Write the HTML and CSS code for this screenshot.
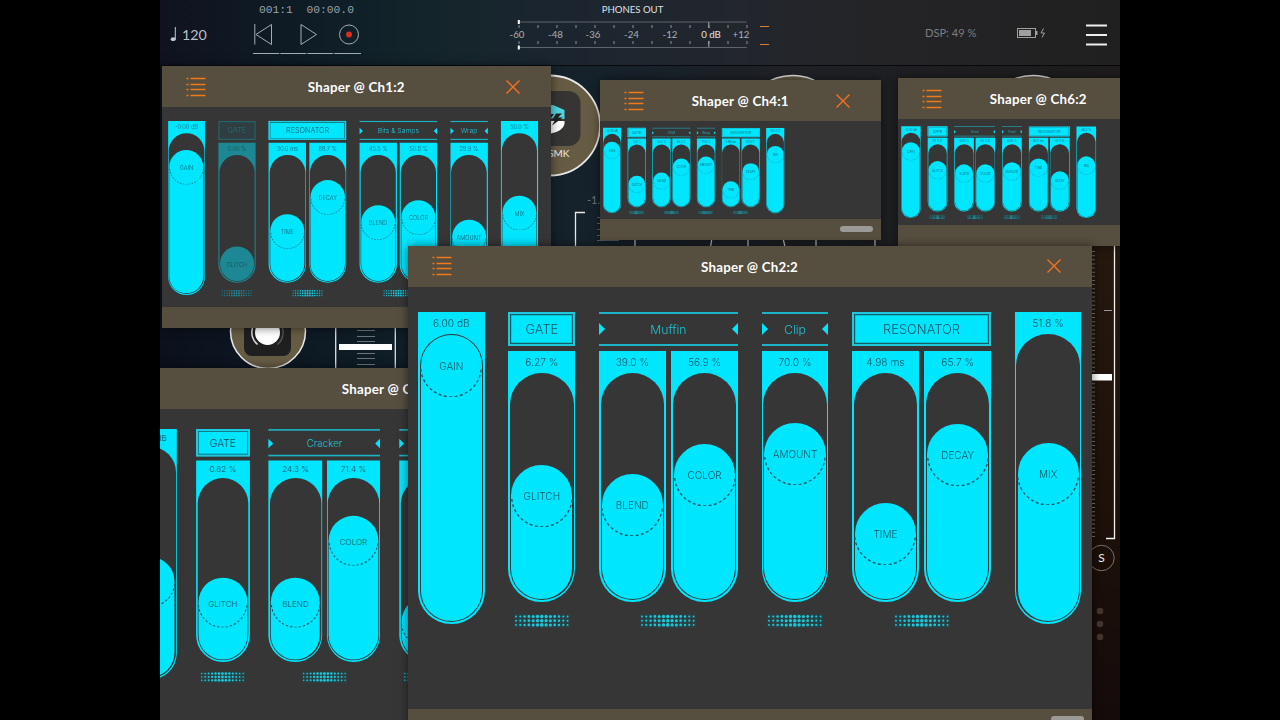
FILE: index.html
```html
<!DOCTYPE html>
<html lang="en">
<head>
    <meta charset="UTF-8">
    <meta name="viewport" content="width=device-width, initial-scale=1.0">
    <title>Shaper</title>
    <link rel="stylesheet" href="styles.css">
</head>
<body>

<!-- shared icons -->
<svg class="defs" width="0" height="0">
    <symbol id="list" viewBox="0 0 20 20">
        <path d="M4.5 1.5H19.5M4.5 7.5H19.5M4.5 12.5H19.5M4.5 18.5H19.5M0.5 1.5H2.5M0.5 7.5H2.5M0.5 12.5H2.5M0.5 18.5H2.5" fill="none" stroke="#ee7a1a" stroke-width="1.3"/>
    </symbol>
    <symbol id="close" viewBox="0 0 14 14">
        <path d="M0.5 0.5L13.5 13.5M13.5 0.5L0.5 13.5" fill="none" stroke="#f9731a" stroke-width="1.3"/>
    </symbol>
</svg>

<div class="screen">
    <svg class="mixer" width="960" height="720" viewBox="160 0 960 720">
        <!-- channel circles -->
        <circle cx="550" cy="125.5" r="50" fill="#665b43" stroke="#e8e8e8" stroke-width="1.8"/>
        <rect x="524" y="91" width="56.5" height="55" rx="12" fill="#363534"/>
        <path d="M545 106L553 105L564.5 110V119H545Z" fill="#4fd6e2"/>
        <path d="M545 121H564.5V124Q563 131 551 133.5H545Z" fill="#fff"/>
        <path d="M545 114H554L551 118H545ZM556 113.5H562L558 117.5H563L552 125.5L555 120H545V118.5H553Z" fill="#222"/>
        <text x="569.5" y="157" text-anchor="end" class="channel-name">SMK</text>
        <circle cx="792.5" cy="125.5" r="50" fill="#665b43" stroke="#ddd" stroke-width="1.5"/>
        <circle cx="1033" cy="125.5" r="50" fill="#665b43" stroke="#ddd" stroke-width="1.5"/>
        <text x="587" y="204" class="db">-1.2</text>
        <path d="M585 212.5H575.5V250" fill="none" stroke="#e8e8e8" stroke-width="1.3"/>
        <path d="M597 217.5h4M597 223.5h4M597 229.5h4M597 235.5h4M597 240.5h22" stroke="#59636a"/>
        <path d="M635 238V247M712 238L710.5 247M748 238V247M783 238L785 247M816 238V247M875 238V247" stroke="#d0d0d0" stroke-width="1.2"/>
        <!-- knob and fader -->
        <circle cx="268" cy="331" r="37.5" fill="#665b43" stroke="#e8e8e8" stroke-width="1.5"/>
        <rect x="244" y="308" width="47" height="48" rx="8" fill="#1f1f1f"/>
        <circle cx="267.5" cy="332.5" r="12.5" fill="#fff"/>
        <path d="M257.5 344.5A15.5 15.5 0 0 1 252.5 328" fill="none" stroke="#ddd" stroke-width="1.5"/>
        <path d="M277.5 344.5A15.5 15.5 0 0 0 282.5 328" fill="none" stroke="#555" stroke-width="1.5"/>
        <path d="M335.7 320V370M395.3 320V370" stroke="#e0e0e0" stroke-width="1.3"/>
        <path d="M357 330.5h18M357 336.5h18M357 341.5h18M357 353.5h18M357 358.5h18M357 364.5h18" stroke="#6d7378"/>
        <rect x="339" y="344" width="53" height="6" fill="#fff"/>
        <!-- master strip -->
        <linearGradient id="strip" x1="0" y1="0" x2="0" y2="1">
            <stop offset="0" stop-color="#24180f"/>
            <stop offset="0.6" stop-color="#1c1009"/>
            <stop offset="1" stop-color="#150b0b"/>
        </linearGradient>
        <rect x="1092" y="246" width="28" height="474" fill="url(#strip)"/>
        <path d="M1093.5 251V540" stroke="#77716b" stroke-width="3" stroke-dasharray="1 3.13"/>
        <path d="M1114.5 246V538.5H1106" fill="none" stroke="#f0f0f0" stroke-width="1.3"/>
        <path d="M1104 310.5H1112" stroke="#999"/>
        <rect x="1090" y="374" width="22" height="6.5" fill="#fff"/>
        <circle cx="1101.5" cy="558" r="12.7" fill="none" stroke="#7d706a"/>
        <text x="1101.5" y="562" text-anchor="middle" class="solo">S</text>
        <g fill="#46352e"><circle cx="1100" cy="611" r="3.3"/><circle cx="1100" cy="624" r="3.3"/><circle cx="1100" cy="637" r="3.3"/></g>
    </svg>

    <header class="topbar">
        <div class="tempo">
            <svg width="7" height="16" viewBox="0 0 7 16"><path d="M5.3 1V13" stroke="#c5c9cc"/><ellipse cx="3.2" cy="13.2" rx="2.5" ry="1.9" fill="#c5c9cc"/></svg>
            <span>120</span>
        </div>
        <div class="transport">
            <pre class="clock">001:1  00:00.0</pre>
            <svg width="108" height="35" viewBox="0 0 108 35" fill="none" stroke="#a4adb3">
                <path d="M1.8 5V25.5M18.5 5.5V25.5L3 15.5Z M48 5.5V25.5L63.5 15.5Z"/>
                <circle cx="96" cy="15.5" r="9.5"/>
                <circle cx="96" cy="15.5" r="3" fill="#d8301c" stroke="none"/>
                <path d="M0 34.5H26.3M27.3 34.5H53.3M54.3 34.5H80.3M81.3 34.5H108"/>
            </svg>
        </div>
        <svg class="meter" width="280" height="60" viewBox="500 0 280 60">
            <text x="632.5" y="12.5" class="meter-title">PHONES OUT</text>
            <path d="M518.5 22H746.7M518.5 47.5H746.7" stroke="#5d656c"/>
            <path d="M518.5 26.5H747.5M518.5 42.5H747.5" stroke="#8b9297" stroke-width="3" stroke-dasharray="1 18"/>
            <path d="M708.8 22V28M708.8 41V47" stroke="#aaa"/>
            <path d="M518.8 20V24M518.8 45.5V49.5" stroke="#fff" stroke-width="2"/>
            <g class="meter-scale">
                <text x="517" y="38">-60</text><text x="555.5" y="38">-48</text><text x="593" y="38">-36</text>
                <text x="631.5" y="38">-24</text><text x="670" y="38">-12</text><text x="711" y="38" class="zero">0 dB</text>
                <text x="741" y="38">+12</text>
            </g>
            <path d="M760 26.5H769M760 44.5H769" stroke="#d98032" stroke-width="1.2"/>
        </svg>
        <span class="dsp">DSP: 49 %</span>
        <svg class="battery" width="29" height="12" viewBox="0 0 29 12">
            <rect x="0.5" y="1.5" width="18" height="9" fill="none" stroke="#a0a0a0"/>
            <path d="M2 3H14V9H2ZM19 4H20.5V8H19Z" fill="#a0a0a0"/>
            <path d="M26.5 1.5L24 6H27.5L25 10.5" fill="none" stroke="#a0a0a0"/>
        </svg>
        <svg class="burger" width="21" height="22" viewBox="0 0 21 22"><path d="M0 1.5H21M0 11H21M0 20.5H21" stroke="#eee" stroke-width="1.8"/></svg>
    </header>
</div>

<script>
    // third value of a slider = distance from its top to the top of the thumb
    const windows = [
        { id: 'ch3', title: 'Shaper @ Ch3:1', scale: 0.803, groups: [
            { sliders: [['GAIN', '-0.00 dB', 159]] },
            { name: 'GATE', sliders: [['GLITCH', '0.82 %', 146]] },
            { name: 'Cracker', menu: true, sliders: [['BLEND', '24.3 %', 146], ['COLOR', '71.4 %', 69]] },
            { name: '', menu: true, sliders: [['', '', 170]] }
        ]},
        { id: 'ch1', title: 'Shaper @ Ch1:2', scale: 0.558, groups: [
            { sliders: [['GAIN', '-0.00 dB', 52]] },
            { name: 'GATE', off: true, sliders: [['GLITCH', '0.00 %', 186]] },
            { name: 'RESONATOR', sliders: [['TIME', '30.6 ms', 127.6], ['DECAY', '88.7 %', 67.3]] },
            { name: 'Bits & Samps', menu: true, sliders: [['BLEND', '45.5 %', 111.5], ['COLOR', '50.8 %', 102.5]] },
            { name: 'Wrap', menu: true, sliders: [['AMOUNT', '28.9 %', 138]] },
            { sliders: [['MIX', '50.0 %', 134.4]] }
        ]},
        { id: 'ch4', title: 'Shaper @ Ch4:1', scale: 0.2737, groups: [
            { sliders: [['GAIN', '-0.00 dB', 51]] },
            { name: 'GATE', sliders: [['GLITCH', '1.00 %', 136]] },
            { name: 'OSM', menu: true, sliders: [['BLEND', '33.3 %', 124], ['COLOR', '68.0 %', 73]] },
            { name: 'Wrap', menu: true, sliders: [['AMOUNT', '70.0 %', 66]] },
            { name: 'RESONATOR', sliders: [['TIME', '4.98 ms', 156], ['DECAY', '55.5 %', 90]] },
            { sliders: [['MIX', '100.0 %', 66]] }
        ]},
        { id: 'ch6', title: 'Shaper @ Ch6:2', scale: 0.294, groups: [
            { sliders: [['GAIN', '-0.00 dB', 54]] },
            { name: 'GATE', sliders: [['GLITCH', '50.0 %', 79]] },
            { name: 'Acid', menu: true, sliders: [['BLEND', '50.0 %', 90], ['COLOR', '50.0 %', 90]] },
            { name: 'Fold', menu: true, sliders: [['AMOUNT', '60.0 %', 83]] },
            { name: 'RESONATOR', sliders: [['TIME', '80.0 ms', 70], ['DECAY', '50.0 %', 114]] },
            { sliders: [['MIX', '66.2 %', 102]] }
        ]},
        { id: 'ch2', title: 'Shaper @ Ch2:2', scale: 1, groups: [
            { sliders: [['GAIN', '6.00 dB', 23]] },
            { name: 'GATE', sliders: [['GLITCH', '6.27 %', 114]] },
            { name: 'Muffin', menu: true, sliders: [['BLEND', '39.0 %', 123], ['COLOR', '56.9 %', 93]] },
            { name: 'Clip', menu: true, sliders: [['AMOUNT', '70.0 %', 72]] },
            { name: 'RESONATOR', sliders: [['TIME', '4.98 ms', 152], ['DECAY', '65.7 %', 73]] },
            { sliders: [['MIX', '51.8 %', 131]] }
        ]}
    ];

    function dots() {
        let out = '';
        for (let c = 0; c < 13; c++) {
            const r = 1.8 - Math.abs(c - 6) * 0.14;
            for (let row = 0; row < 3; row++) {
                out += `<circle cx="${2 + c * 4.3}" cy="${2.5 + row * 4.2}" r="${r.toFixed(2)}"/>`;
            }
        }
        return `<svg class="dots" width="56" height="14" viewBox="0 0 56 14">${out}</svg>`;
    }

    function slider([name, value, y]) {
        return `<div class="slider">
            <span class="value">${value}</span>
            <div class="track">
                <div class="fill" style="top: ${y - 22}px">
                    <div class="thumb">
                        <svg width="62" height="62" viewBox="0 0 62 62"><path d="M0.8 34A30.3 30.3 0 0 0 61.2 34"/></svg>
                        <span>${name}</span>
                    </div>
                </div>
            </div>
        </div>`;
    }

    function group(g) {
        const effect = g.name !== undefined;
        const head = effect ? `<div class="${g.menu ? 'select' : 'toggle'}"><span>${g.name.replace('&', '&amp;')}</span></div>` : '';
        return `<div class="group${effect ? '' : ' tall'}${g.off ? ' off' : ''}">
            ${head}
            <div class="sliders">${g.sliders.map(slider).join('')}</div>
            ${effect ? dots() : ''}
        </div>`;
    }

    windows.forEach(w => {
        const el = document.createElement('section');
        el.className = 'window ' + w.id;
        el.innerHTML = `<div class="titlebar">
                <svg class="icon-list" width="20" height="20"><use href="#list"/></svg>
                <h2>${w.title}</h2>
                <svg class="icon-close" width="14" height="14"><use href="#close"/></svg>
            </div>
            <div class="content"><div class="rack" style="transform: scale(${w.scale})">${w.groups.map(group).join('')}</div></div>
            <div class="footer"><i class="grip"></i></div>`;
        document.querySelector('.screen').appendChild(el);
    });
</script>

</body>
</html>
```
FILE: styles.css
```css
* {
    box-sizing: border-box;
}
body {
    margin: 0;
    background: #000;
    font-family: Lato, "Liberation Sans", sans-serif;
}
.defs {
    position: absolute;
}
.screen {
    position: relative;
    width: 960px;
    height: 720px;
    margin: 0 auto;
    overflow: hidden;
    background: linear-gradient(90deg, #0b111c 0%, #10212a 30%, #16222b 45%, #1f2126 65%, #1e1c1c 100%);
}
.mixer {
    position: absolute;
    left: 0;
    top: 0;
}
.channel-name {
    font-size: 10px;
    fill: #eee;
}
.db {
    font-size: 11px;
    fill: #6d757b;
}
.solo {
    font-size: 12px;
    fill: #eee;
}

/* top bar */
.topbar {
    position: relative;
    display: flex;
    height: 66px;
    padding-left: 10px;
    border-bottom: 1px solid #080a0e;
    background: linear-gradient(90deg, #10131f 0%, #0e1c26 15%, #13252a 28%, #1b252f 40%, #22262d 60%, #242427 75%, #212020 100%);
}
.tempo {
    display: flex;
    width: 83px;
    padding-top: 25px;
    gap: 5px;
    color: #b9bfc4;
    font-size: 14.3px;
    line-height: 19px;
}
.tempo svg {
    margin-top: 1px;
}
.transport {
    width: 108px;
}
.transport svg {
    display: block;
}
.clock {
    margin: 3px 0 2px 6px;
    color: #9aa2a8;
    font: 11.3px/14px "Liberation Mono", monospace;
}
.meter {
    margin-left: 139px;
}
.meter-title {
    fill: #dfe2e4;
    font-size: 9.6px;
    text-anchor: middle;
}
.meter-scale {
    fill: #a9afb4;
    font-size: 9.7px;
    text-anchor: middle;
}
.meter-scale .zero {
    fill: #e2e4e6;
}
.dsp {
    width: 92px;
    margin-left: 145px;
    color: #7d7e82;
    font-size: 11.1px;
    line-height: 66px;
}
.battery {
    margin-top: 27px;
}
.burger {
    margin: 24px 0 0 40px;
}

/* plugin windows */
.window {
    position: absolute;
    display: flex;
    flex-direction: column;
    background: #363636;
    box-shadow: 0 0 9px rgba(0, 0, 0, 0.55);
    overflow: hidden;
}
.ch1 { left: 2px; top: 66px; width: 389px; height: 262px; }
.ch2 { left: 247.5px; top: 245.5px; width: 684.5px; height: 484px; }
.ch3 { left: -46px; top: 367.5px; width: 553px; height: 380px; }
.ch4 { left: 440px; top: 80px; width: 281px; height: 160px; }
.ch6 { left: 738px; top: 78px; width: 281px; height: 168px; }
.titlebar {
    display: flex;
    flex: none;
    align-items: center;
    justify-content: space-between;
    height: 41px;
    padding: 0 30.5px 0 24px;
    background: #564e3f;
}
.titlebar h2 {
    margin: 0;
    padding-top: 1px;
    color: #fff;
    font-size: 13.3px;
    font-weight: 700;
    letter-spacing: 0.25px;
}
.content {
    flex: 1;
    min-height: 0;
    overflow: hidden;
}
.ch3 .content {
    padding-left: 1px;
}
.footer {
    display: flex;
    flex: none;
    align-items: flex-start;
    justify-content: flex-end;
    height: 21px;
    padding: 7px 8px 0 0;
    background: #564e3f;
}
.grip {
    width: 33px;
    height: 6px;
    border-radius: 3px;
    background: #9c9a97;
}

/* slider rack, drawn at full size and scaled per window */
.rack {
    display: flex;
    gap: 23.8px;
    width: 684px;
    padding: 25px 10.5px 0;
    transform-origin: 0 0;
    color: #0a5563;
    font-family: Inter, Roboto, sans-serif;
    font-weight: 300;
}
.group {
    display: flex;
    flex: none;
    flex-direction: column;
    align-items: center;
}
.group.off {
    opacity: 0.47;
}
.toggle,
.select {
    display: flex;
    align-items: center;
    justify-content: center;
    width: 100%;
    height: 34px;
    margin-bottom: 5px;
    padding-top: 1px;
    font-size: 12.9px;
}
.toggle {
    border: 2px solid #1fc9dd;
    background: #00e6ff;
    box-shadow: inset 0 0 0 1.2px #145d69;
}
.off .toggle {
    border-color: #1796a6;
    background: #2b4a4f;
    color: #12a3b5;
}
.select {
    justify-content: space-between;
    border-top: 2px solid #1bb4c6;
    border-bottom: 2px solid #1bb4c6;
    color: #1fc3d6;
    font-size: 12.2px;
}
.select::before,
.select::after {
    content: "";
    border: 6.5px solid transparent;
}
.select::before {
    border-left-color: #00e6ff;
    border-right: 0;
}
.select::after {
    border-right-color: #00e6ff;
    border-left: 0;
}
.sliders {
    display: flex;
    gap: 5.5px;
}
.slider {
    display: flex;
    flex-direction: column;
    width: 66.7px;
    height: 251px;
    padding: 0 1.6px 1.6px;
    border-radius: 0 0 33.3px 33.3px;
    background: #00e6ff;
}
.tall .slider {
    height: 312px;
}
.value {
    height: 22px;
    font-size: 10.2px;
    line-height: 22.5px;
    text-align: center;
    white-space: nowrap;
}
.track {
    position: relative;
    flex: 1;
    border-radius: 31.7px;
    background: #363636;
}
.fill {
    position: absolute;
    left: 1.2px;
    right: 1.2px;
    bottom: 1.4px;
    border-radius: 31px;
    background: #00e6ff;
}
.thumb {
    display: flex;
    position: relative;
    align-items: center;
    justify-content: center;
    height: 62px;
    padding-top: 1px;
    font-size: 10px;
}
.thumb svg {
    position: absolute;
    left: 50%;
    top: 0;
    margin-left: -31px;
    fill: none;
    stroke: #0b5d6b;
    stroke-width: 1.4;
    stroke-dasharray: 3 2.4;
}
.off .thumb svg {
    display: none;
}
.dots {
    margin-top: 12px;
    background: #2a4043;
    fill: #1fc6d8;
}
.off .dots {
    background: none;
    fill: #00e6ff;
}
```
